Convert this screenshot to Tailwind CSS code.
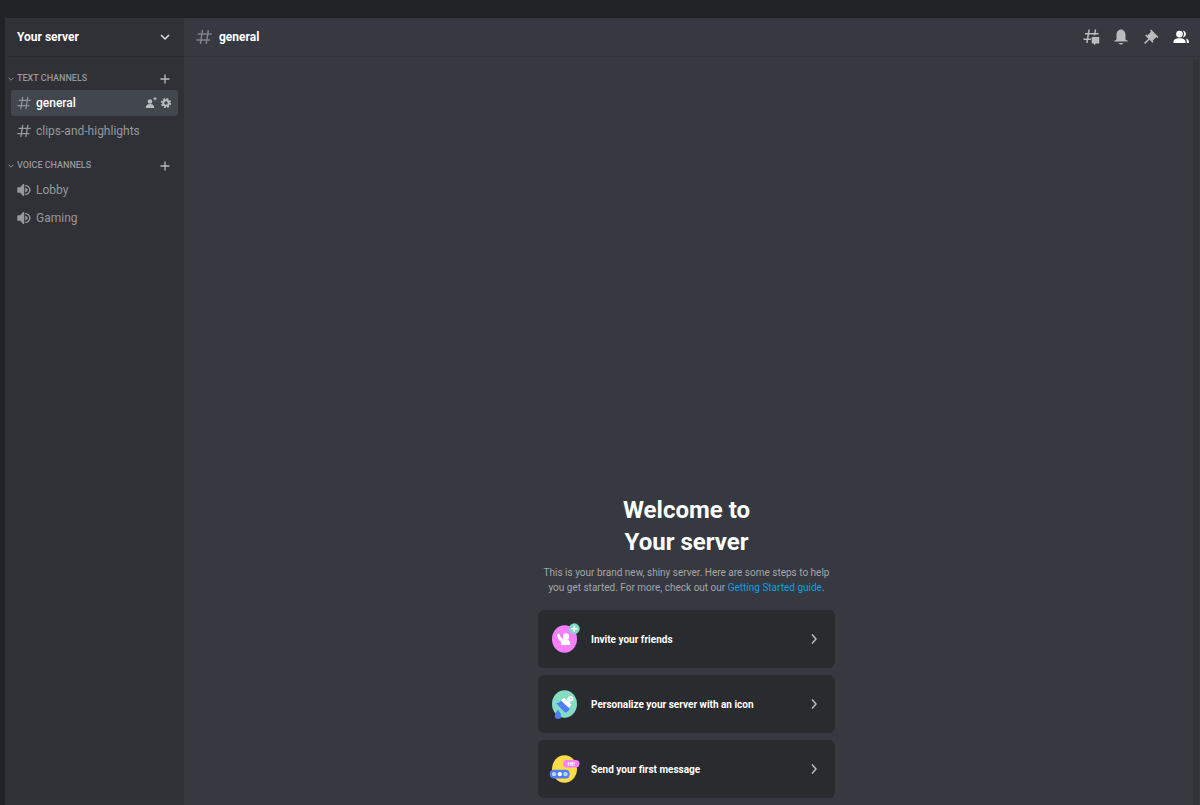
<!DOCTYPE html>
<html lang="en">
<head>
    <meta charset="UTF-8">
    <meta name="viewport" content="width=device-width, initial-scale=1.0">
    <title>general | Your server</title>
    <script src="https://cdn.jsdelivr.net/npm/@tailwindcss/browser@4"></script>
</head>
<body class="flex h-screen flex-col overflow-hidden bg-[#202225] pt-[18px] pl-[5px] font-[Roboto,'Noto_Sans',sans-serif] text-[#96989d]">
    <!-- Shared icons -->
    <svg class="hidden">
        <symbol id="hash" viewBox="1 1 22 22">
            <path d="M10 2.500L7 21.500M18 2.500l-3 19M3.500 8h19M1.500 16h19" fill="none" stroke="currentColor" stroke-width="2"/>
        </symbol>
        <symbol id="plus" viewBox="0 0 10 10">
            <path d="M5 0.500v9M0.500 5h9" fill="none" stroke="currentColor" stroke-width="1.300"/>
        </symbol>
        <symbol id="down" viewBox="0 0 10 10">
            <path d="M1 3l4 4 4-4" fill="none" stroke="currentColor" stroke-width="1.500"/>
        </symbol>
        <symbol id="right" viewBox="0 0 10 10">
            <path d="M3 0.500l4 4.500-4 4.500" fill="none" stroke="currentColor" stroke-width="1.500"/>
        </symbol>
        <symbol id="speaker" viewBox="1 1 22 22">
            <path fill="currentColor" d="M11.800 2.500c-.4-.2-.8-.1-1.100.2L6 7.500H2.500c-.6 0-1 .4-1 1v7c0 .6.400 1 1 1H6l4.700 4.800c.3.300.700.4 1.100.2.400-.1.600-.5.600-.9V3.400c0-.4-.2-.8-.6-.9zM14 4v2.200c3.400 0 6 2.500 6 5.800s-2.600 5.800-6 5.800V20c4.600 0 8.200-3.600 8.200-8S18.600 4 14 4zm0 4.500v7c2 0 3.600-1.500 3.600-3.500S16 8.500 14 8.500z"/>
        </symbol>
    </svg>

    <div class="flex min-h-0 flex-1">
        <!-- Sidebar -->
        <aside class="flex w-[179px] shrink-0 flex-col bg-[#2f3136]">
            <button type="button" class="flex h-[39px] items-center justify-between border-b border-[#2a2c30] px-3 text-xs font-bold text-white">
                <span>Your server</span>
                <svg class="mr-[2px] size-[10px] text-[#dcddde]"><use href="#down"/></svg>
            </button>

            <nav class="px-[6px]">
                <!-- Text channels -->
                <div class="mt-[14px] mb-[3px] flex h-4 items-center pr-2">
                    <svg class="-ml-[3px] mr-[3px] size-[6px]"><use href="#down"/></svg>
                    <h2 class="flex-1 text-[9px] font-medium">TEXT CHANNELS</h2>
                    <button type="button" aria-label="Create text channel"><svg class="size-[10px] text-[#b9bbbe]"><use href="#plus"/></svg></button>
                </div>
                <ul class="space-y-px text-xs">
                    <li class="flex h-[26px] items-center rounded-[3px] bg-[#42464d] px-[6px]">
                        <a href="#" class="flex flex-1 items-center gap-[5px] font-medium text-white">
                            <svg class="size-[14px] text-[#8e9297]"><use href="#hash"/></svg>general
                        </a>
                        <button type="button" aria-label="Create invite" class="mr-[3px]">
                            <svg class="size-3 text-[#b9bbbe]" viewBox="0 0 12 12" fill="currentColor">
                                <circle cx="5" cy="4.500" r="2.300"/>
                                <path d="M0.800 11c0-2.600 1.400-3.900 4.200-3.900S9.200 8.400 9.200 11zM9.500 0h1v1.300h1.300v1h-1.300v1.300h-1V2.300H8.200v-1h1.300z"/>
                            </svg>
                        </button>
                        <button type="button" aria-label="Edit channel">
                            <svg class="size-3 text-[#b9bbbe]" viewBox="0 0 24 24" fill="none" stroke="currentColor">
                                <circle cx="12" cy="12" r="5.500" stroke-width="4"/>
                                <circle cx="12" cy="12" r="8.500" stroke-width="3.500" stroke-dasharray="3.700 2.976"/>
                            </svg>
                        </button>
                    </li>
                    <li>
                        <a href="#" class="flex h-[27px] items-center gap-[5px] px-[6px]">
                            <svg class="size-[14px]"><use href="#hash"/></svg>clips-and-highlights
                        </a>
                    </li>
                </ul>

                <!-- Voice channels -->
                <div class="mt-[14px] mb-[2px] flex h-4 items-center pr-2">
                    <svg class="-ml-[3px] mr-[3px] size-[6px]"><use href="#down"/></svg>
                    <h2 class="flex-1 text-[9px] font-medium">VOICE CHANNELS</h2>
                    <button type="button" aria-label="Create voice channel"><svg class="size-[10px] text-[#b9bbbe]"><use href="#plus"/></svg></button>
                </div>
                <ul class="space-y-px text-xs">
                    <li>
                        <a href="#" class="flex h-[27px] items-center gap-[5px] px-[6px]">
                            <svg class="size-[14px]"><use href="#speaker"/></svg>Lobby
                        </a>
                    </li>
                    <li>
                        <a href="#" class="flex h-[27px] items-center gap-[5px] px-[6px]">
                            <svg class="size-[14px]"><use href="#speaker"/></svg>Gaming
                        </a>
                    </li>
                </ul>
            </nav>
        </aside>

        <!-- Chat -->
        <main class="flex min-w-0 flex-1 flex-col bg-[#36393f]">
            <header class="flex h-[39px] shrink-0 items-center border-b border-[#303338] pr-[10px] pl-3">
                <svg class="mr-[7px] size-4 text-[#80848b]"><use href="#hash"/></svg>
                <h1 class="flex-1 text-xs font-bold text-white">general</h1>
                <div class="flex items-center gap-3 text-[#b9bbbe]">
                    <button type="button" aria-label="Threads">
                        <svg class="size-[18px]" viewBox="0 0 24 24">
                            <path d="M9.500 2L6.500 20M18 2l-1.300 8M4 7.500h18M2 15h10" fill="none" stroke="currentColor" stroke-width="2"/>
                            <path d="M13 12h10v8.500h-4.500L16 23v-2.500h-3z" fill="currentColor"/>
                        </svg>
                    </button>
                    <button type="button" aria-label="Notification settings">
                        <svg class="size-[18px]" viewBox="0 0 24 24" fill="currentColor">
                            <path d="M18 9v5c0 1.700 1.300 3 3 3v1H3v-1c1.700 0 3-1.300 3-3V9c0-3.900 2.700-7 6-7s6 3.100 6 7zM12 22c-1.500 0-2.700-.8-3.200-2h6.400c-.5 1.200-1.700 2-3.200 2z"/>
                        </svg>
                    </button>
                    <button type="button" aria-label="Pinned messages">
                        <svg class="size-[18px]" viewBox="0 0 24 24" fill="currentColor">
                            <path d="M22 12l-9.900-9.900-1.400 1.400 1.400 1.400-4.900 5-.1.100L5.700 8.500 4.200 9.900l4.300 4.300-5.700 5.600 1.400 1.400 5.700-5.600 4.200 4.200 1.400-1.400-1.400-1.400 5-5 1.500 1.400z"/>
                        </svg>
                    </button>
                    <button type="button" aria-label="Member list" class="text-white">
                        <svg class="size-[18px]" viewBox="0 0 24 24" fill="currentColor">
                            <circle cx="10" cy="8" r="4.500"/>
                            <path d="M2 20v-1.500C2 15 5 13.500 10 13.500s8 1.500 8 5V20zM14.500 3.700c2.400 0 4 1.900 4 4.300s-1.600 4.200-4 4.300c1-1.200 1.500-2.600 1.500-4.300s-.5-3.100-1.500-4.300zM19.700 20h2.800v-1.500c0-2.200-1.300-3.900-3.900-4.600.8 1.200 1.100 2.600 1.100 4.600z"/>
                        </svg>
                    </button>
                </div>
            </header>

            <div class="flex min-h-0 flex-1">
                <section class="flex flex-1 flex-col items-center justify-end px-4 pb-[7px]">
                    <h2 class="mb-[7px] text-center text-2xl leading-8 font-bold text-white">Welcome to<br>Your server</h2>
                    <p class="mb-[15px] text-center text-[10px] leading-[15px] text-[#a3a6aa]">
                        This is your brand new, shiny server. Here are some steps to help<br>
                        you get started. For more, check out our <a href="#" class="text-[#0f9fe8]">Getting Started guide</a>.
                    </p>
                    <div class="flex w-full max-w-[297px] flex-col gap-[7px] text-[10px] font-bold text-white">
                        <button type="button" class="flex h-[58px] items-center rounded-md bg-[#292b2f] pr-4 pl-[11px] text-left">
                            <svg class="mr-[10px] size-8" viewBox="0 0 32 32">
                                <ellipse cx="15.500" cy="16" rx="12.500" ry="13.700" fill="#f47fff"/>
                                <g fill="#fff">
                                    <circle cx="17" cy="13.500" r="3.200"/>
                                    <path d="M8 11.500l2.200-1c.7 2.600 1.900 5 4.300 5.700l4.500.2c1.500.6 2.400 3.300 2.400 5.600h-9.200v-3.200C9.700 17.200 8.200 14.600 8 11.500z"/>
                                </g>
                                <circle cx="25.300" cy="5.700" r="5.400" fill="#7adcc0"/>
                                <path d="M25.300 2.500v6.400M22.100 5.700h6.400" stroke="#fff" stroke-width="1.600"/>
                            </svg>
                            <span class="flex-1">Invite your friends</span>
                            <svg class="size-[10px] text-[#b9bbbe]"><use href="#right"/></svg>
                        </button>
                        <button type="button" class="flex h-[58px] items-center rounded-md bg-[#292b2f] pr-4 pl-[11px] text-left">
                            <svg class="mr-[10px] size-8" viewBox="0 0 32 32">
                                <ellipse cx="15.500" cy="16" rx="12.500" ry="13.700" fill="#84dcc3"/>
                                <path d="M7 15c2 .3 3.500-.5 5-2.500l9 8.500-3 3c-1 .7-1.700.7-2.700 0z" fill="#4f7dfb"/>
                                <path d="M12 12.500l2.800-2.800 2.400 2.100 2.300-2.300 3 3-2 2.300 1.800 2.200-2.500 2.800z" fill="#fff"/>
                                <circle cx="21.700" cy="10.500" r="1.800" fill="none" stroke="#fff" stroke-width="1.500"/>
                                <path d="M9 21.500c1.500 2.300 3.200 4.400 3.200 6.200a3.200 3.200 0 0 1-6.400 0c0-1.800 1.700-3.900 3.200-6.200z" fill="#4f7dfb"/>
                            </svg>
                            <span class="flex-1">Personalize your server with an icon</span>
                            <svg class="size-[10px] text-[#b9bbbe]"><use href="#right"/></svg>
                        </button>
                        <button type="button" class="flex h-[58px] items-center rounded-md bg-[#292b2f] pr-4 pl-[11px] text-left">
                            <svg class="mr-[10px] size-8" viewBox="0 0 32 32">
                                <ellipse cx="15.500" cy="16" rx="12.500" ry="13.700" fill="#fddc4b"/>
                                <rect x="14" y="7" width="16.500" height="7.400" rx="3.700" fill="#f47fff"/>
                                <text x="22.200" y="13" text-anchor="middle" font-size="6" font-weight="700" fill="#fff">HI!</text>
                                <rect x="0.800" y="16.800" width="19.800" height="8.600" rx="4" fill="#4f7dfb"/>
                                <circle cx="5" cy="21.100" r="2.200" fill="#c3d2fe"/>
                                <circle cx="10.800" cy="21.100" r="2.200" fill="#fff"/>
                                <circle cx="16.500" cy="21.100" r="2.200" fill="#c3d2fe"/>
                            </svg>
                            <span class="flex-1">Send your first message</span>
                            <svg class="size-[10px] text-[#b9bbbe]"><use href="#right"/></svg>
                        </button>
                    </div>
                </section>
                <!-- Scroll track -->
                <div class="mt-[2px] mr-px ml-1 w-[6px] rounded-t-full bg-[#303338]"></div>
            </div>
        </main>
    </div>
</body>
</html>
